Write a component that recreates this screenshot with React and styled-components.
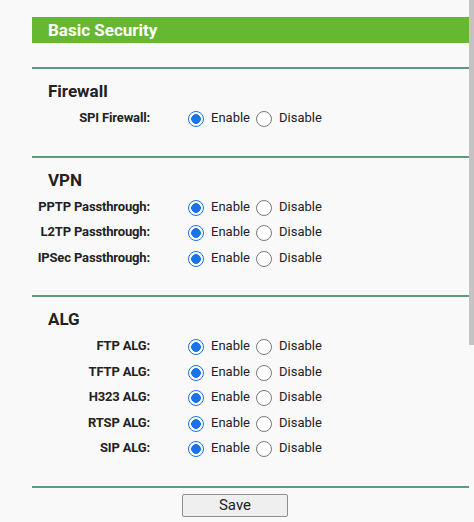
import React, { useState } from "react";
import styled, { createGlobalStyle } from "styled-components";

const sections = [
  { id: "firewall", title: "Firewall", rows: [{ id: "spi", label: "SPI Firewall:" }] },
  {
    id: "vpn",
    title: "VPN",
    rows: [
      { id: "pptp", label: "PPTP Passthrough:" },
      { id: "l2tp", label: "L2TP Passthrough:" },
      { id: "ipsec", label: "IPSec Passthrough:" },
    ],
  },
  {
    id: "alg",
    title: "ALG",
    rows: [
      { id: "ftp", label: "FTP ALG:" },
      { id: "tftp", label: "TFTP ALG:" },
      { id: "h323", label: "H323 ALG:" },
      { id: "rtsp", label: "RTSP ALG:" },
      { id: "sip", label: "SIP ALG:" },
    ],
  },
];

const GlobalStyle = createGlobalStyle`
  html, body {
    margin: 0;
    padding: 0;
    background: #f9f9f9;
    font-family: Roboto, "Liberation Sans", Arial, sans-serif;
    color: #222;
  }
`;

const Page = styled.div`
  padding: 17px 5px 0 32px;
`;

// scroll thumb drawn over the right edge, as in the mobile screenshot
const ScrollThumb = styled.div`
  position: fixed;
  top: 0;
  right: 0;
  width: 5px;
  height: 345px;
  background: #c3c3c3;
`;

const Header = styled.div`
  height: 26px;
  background: #66b833;
  color: #fff;
  font-size: 17px;
  font-weight: 700;
  line-height: 27px;
  padding-left: 16px;
`;

const Section = styled.section`
  border-top: 2px solid #5c9c7c;
  padding-bottom: 25px;
  margin-top: ${(p) => (p.$first ? "24px" : "0")};
`;

const SectionTitle = styled.h3`
  margin: 12px 0 4px 16px;
  font-size: 17px;
  font-weight: 700;
  line-height: 20px;
`;

const Row = styled.div`
  display: flex;
  align-items: center;
  height: 25.5px;
`;

const Label = styled.div`
  width: 118px;
  text-align: right;
  font-size: 13px;
  font-weight: 700;
  letter-spacing: -0.15px;
  margin-right: 38px;
`;

const Option = styled.label`
  display: flex;
  align-items: center;
  font-size: 13px;
  margin-right: 6px;
  cursor: pointer;
`;

const Radio = styled.input.attrs({ type: "radio" })`
  appearance: none;
  margin: 3px 7px 0 0;
  width: 16px;
  height: 16px;
  border-radius: 50%;
  border: 1px solid ${(p) => (p.checked ? "#1a73e8" : "#7a7a7a")};
  background: ${(p) =>
    p.checked ? "radial-gradient(circle, #1a73e8 0 4.6px, #fff 5px)" : "#fff"};
  box-sizing: border-box;
  cursor: pointer;
`;

const Footer = styled.div`
  border-top: 2px solid #5c9c7c;
  padding: 6px 0 0 150px;
`;

const SaveButton = styled.button`
  width: 106px;
  height: 23px;
  border: 1px solid #8f8f8f;
  border-radius: 2px;
  background: #efefef;
  font-family: Roboto, "Liberation Sans", Arial, sans-serif;
  font-size: 15px;
  color: #222;
  padding: 0;
`;

const App = () => {
  const [values, setValues] = useState(() => {
    const init = {};
    sections.forEach((s) => s.rows.forEach((r) => (init[r.id] = "enable")));
    return init;
  });

  const setValue = (id, v) => setValues({ ...values, [id]: v });

  return (
    <Page>
      <GlobalStyle />
      <ScrollThumb />
      <Header>Basic Security</Header>
      {sections.map((section, i) => (
        <Section key={section.id} $first={i === 0}>
          <SectionTitle>{section.title}</SectionTitle>
          {section.rows.map((row) => (
            <Row key={row.id}>
              <Label>{row.label}</Label>
              <Option>
                <Radio
                  name={row.id}
                  checked={values[row.id] === "enable"}
                  onChange={() => setValue(row.id, "enable")}
                />
                Enable
              </Option>
              <Option>
                <Radio
                  name={row.id}
                  checked={values[row.id] === "disable"}
                  onChange={() => setValue(row.id, "disable")}
                />
                Disable
              </Option>
            </Row>
          ))}
        </Section>
      ))}
      <Footer>
        <SaveButton>Save</SaveButton>
      </Footer>
    </Page>
  );
};

export default App;
